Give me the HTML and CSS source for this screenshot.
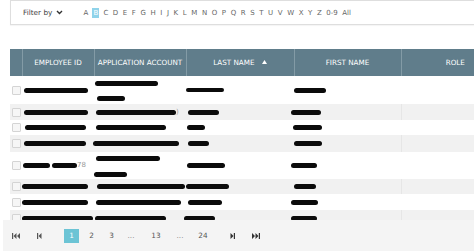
FILE: index.html
```html
<!DOCTYPE html>
<html>
<head>
<meta charset="utf-8">
<link rel="stylesheet" href="styles.css">
</head>
<body>
<div class="filter-bar">
  <span class="filter-label">Filter by
    <svg class="chev" width="7" height="5" viewBox="0 0 7 5"><path d="M1 1 L3.5 3.5 L6 1" fill="none" stroke="#333" stroke-width="1.4"/></svg>
  </span>
  <nav class="alpha">
    <a>A</a><a class="active">B</a><a>C</a><a>D</a><a>E</a><a>F</a><a>G</a><a>H</a><a>I</a><a>J</a><a>K</a><a>L</a><a>M</a><a>N</a><a>O</a><a>P</a><a>Q</a><a>R</a><a>S</a><a>T</a><a>U</a><a>V</a><a>W</a><a>X</a><a>Y</a><a>Z</a><a>0-9</a><a>All</a>
  </nav>
</div>

<div class="grid">
  <div class="grid-body">
    <table>
      <colgroup>
        <col class="c-check"><col class="c-emp"><col class="c-app"><col class="c-last"><col class="c-first"><col class="c-role">
      </colgroup>
      <thead>
        <tr>
          <th></th>
          <th>EMPLOYEE ID</th>
          <th>APPLICATION ACCOUNT</th>
          <th class="sorted">LAST NAME <svg class="sort" width="5" height="4" viewBox="0 0 5 4"><path d="M0 4 L2.5 0 L5 4Z" fill="#fff"/></svg></th>
          <th>FIRST NAME</th>
          <th>ROLE</th>
        </tr>
      </thead>
      <tbody>
        <tr class="h28">
          <td><span class="cb"></span></td>
          <td><span class="bar" style="margin-left:2px;width:64px"></span></td>
          <td><span class="bar" style="margin-left:1px;width:63px"></span><span class="bar line2" style="margin-left:3px;width:28px"></span></td>
          <td><span class="bar thin" style="margin-left:0;width:38px"></span></td>
          <td><span class="bar" style="margin-left:0;width:32px"></span></td>
          <td></td>
        </tr>
        <tr class="h16">
          <td><span class="cb"></span></td>
          <td><span class="bar" style="margin-left:2px;width:64px"></span></td>
          <td><span class="bar" style="margin-left:2px;width:80px"></span><span class="ghost">)</span></td>
          <td><span class="bar" style="margin-left:2px;width:31px"></span></td>
          <td><span class="bar" style="margin-left:-3px;width:30px"></span></td>
          <td></td>
        </tr>
        <tr class="h15">
          <td><span class="cb"></span></td>
          <td><span class="bar" style="margin-left:3px;width:61px"></span></td>
          <td><span class="bar" style="margin-left:2px;width:70px"></span></td>
          <td><span class="bar" style="margin-left:1px;width:18px"></span></td>
          <td><span class="bar" style="margin-left:-1px;width:29px"></span></td>
          <td></td>
        </tr>
        <tr class="h17">
          <td><span class="cb"></span></td>
          <td><span class="bar" style="margin-left:2px;width:62px"></span></td>
          <td><span class="bar" style="margin-left:-1px;width:86px"></span></td>
          <td><span class="bar" style="margin-left:2px;width:21px"></span></td>
          <td><span class="bar" style="margin-left:0;width:28px"></span></td>
          <td></td>
        </tr>
        <tr class="h27">
          <td><span class="cb"></span></td>
          <td><span class="bar" style="margin-left:1px;width:27px"></span><span class="bar" style="margin-left:2px;width:25px"></span><span class="ghost">78</span></td>
          <td><span class="bar" style="margin-left:2px;width:64px"></span><span class="bar line2" style="margin-left:0;width:33px"></span></td>
          <td><span class="bar" style="margin-left:1px;width:38px"></span></td>
          <td><span class="bar" style="margin-left:-3px;width:26px"></span></td>
          <td></td>
        </tr>
        <tr class="h15">
          <td><span class="cb"></span></td>
          <td><span class="bar" style="margin-left:0;width:66px"></span></td>
          <td><span class="bar" style="margin-left:3px;width:88px"></span></td>
          <td><span class="bar" style="margin-left:0;width:43px"></span></td>
          <td><span class="bar" style="margin-left:0;width:22px"></span></td>
          <td></td>
        </tr>
        <tr class="h16">
          <td><span class="cb"></span></td>
          <td><span class="bar" style="margin-left:0;width:66px"></span></td>
          <td><span class="bar" style="margin-left:2px;width:85px"></span></td>
          <td><span class="bar" style="margin-left:2px;width:34px"></span></td>
          <td><span class="bar" style="margin-left:-3px;width:27px"></span></td>
          <td></td>
        </tr>
        <tr class="h16">
          <td><span class="cb"></span></td>
          <td><span class="bar" style="margin-left:0;width:71px"></span></td>
          <td><span class="bar" style="margin-left:1px;width:71px"></span></td>
          <td><span class="bar" style="margin-left:-2px;width:31px"></span></td>
          <td><span class="bar" style="margin-left:-3px;width:26px"></span></td>
          <td></td>
        </tr>
      </tbody>
    </table>
  </div>
  <div class="pager">
    <a class="pg icon i-first"><svg width="8" height="6" viewBox="0 0 8 6"><rect x="0" y="0" width="1.2" height="6" fill="#555"/><path d="M4.5 0 L1.5 3 L4.5 6Z M8 0 L5 3 L8 6Z" fill="#555"/></svg></a>
    <a class="pg icon i-prev"><svg width="5" height="6" viewBox="0 0 5 6"><rect x="0" y="0" width="1.2" height="6" fill="#555"/><path d="M4.5 0 L1.5 3 L4.5 6Z" fill="#555"/></svg></a>
    <a class="pg num active">1</a>
    <a class="pg num">2</a>
    <a class="pg num">3</a>
    <a class="pg dots">...</a>
    <a class="pg num wide w13">13</a>
    <a class="pg dots d2">...</a>
    <a class="pg num wide w24">24</a>
    <a class="pg icon i-next"><svg width="5" height="6" viewBox="0 0 5 6"><path d="M0.5 0 L3.5 3 L0.5 6Z" fill="#333"/><rect x="3.8" y="0" width="1.2" height="6" fill="#333"/></svg></a>
    <a class="pg icon i-last"><svg width="8" height="6" viewBox="0 0 8 6"><path d="M0 0 L3 3 L0 6Z M3.5 0 L6.5 3 L3.5 6Z" fill="#333"/><rect x="6.8" y="0" width="1.2" height="6" fill="#333"/></svg></a>
  </div>
</div>
</body>
</html>
```

FILE: styles.css
```css
html, body {
  margin: 0;
  padding: 0;
  background: #fff;
  overflow: hidden;
  width: 474px;
  height: 252px;
}

body {
  font-family: "DejaVu Sans", Verdana, sans-serif;
  color: #555;
}

.filter-bar {
  margin-left: 10px;
  width: 480px;
  height: 25px;
  box-sizing: border-box;
  border: 1px solid #dedede;
  border-right: none;
  box-shadow: 0 1px 1px rgba(0,0,0,0.04);
  display: flex;
  align-items: center;
  padding-left: 12px;
}

.filter-label {
  font-size: 7.3px;
  color: #444;
  display: flex;
  align-items: center;
  gap: 4px;
  width: 60px;
}

.chev {
  display: block;
}

.alpha {
  display: flex;
  align-items: center;
  gap: 3.8px;
  font-size: 7px;
  color: #666;
}

.alpha a {
  display: block;
  padding: 1px 0.4px;
  line-height: 8px;
}

.alpha a.active {
  background: #8fd3ea;
  color: #fff;
  padding: 1px 1px;
}

.grid {
  margin-top: 24px;
}

.grid-body {
  margin-left: 10px;
  height: 171px;
  overflow: hidden;
}

table {
  border-collapse: collapse;
  table-layout: fixed;
  width: 499px;
}

col.c-check { width: 12px; }
col.c-emp { width: 72px; }
col.c-app { width: 92px; }
col.c-last { width: 108px; }
col.c-first { width: 107px; }
col.c-role { width: 108px; }

th {
  background: #607d8b;
  color: #fff;
  font-weight: normal;
  font-size: 7.2px;
  height: 27px;
  padding: 0;
  text-align: center;
  border-left: 1px solid #839ba6;
  white-space: nowrap;
}

th:first-child {
  border-left: none;
}

.sort {
  margin-left: 5px;
  vertical-align: 1px;
}

td {
  padding: 0;
  vertical-align: middle;
  font-size: 7px;
  color: #888;
  white-space: nowrap;
  overflow: visible;
}

tbody tr:nth-child(even) td {
  background: #f1f1f1;
}

tbody tr:nth-child(even) td:last-child {
  border-left: 1px solid #e6e6e6;
}

tr.h28 { height: 28px; }
tr.h27 { height: 27px; }
tr.h17 { height: 17px; }
tr.h16 { height: 16px; }
tr.h15 { height: 15px; }

.cb {
  display: block;
  width: 7px;
  height: 7px;
  margin-left: 2px;
  border: 1px solid #d4d4d4;
  border-radius: 1px;
  background: #f6f6f6;
}

.bar {
  display: inline-block;
  height: 5px;
  background: #0b0b0b;
  border-radius: 3px;
  vertical-align: middle;
}

.bar.thin {
  height: 4px;
}

.bar.line2 {
  display: block;
  margin-top: 9px;
}

.ghost {
  color: #999;
  font-size: 7px;
  vertical-align: middle;
}

.pager {
  margin-left: 3px;
  height: 31px;
  background: #f4f4f4;
  display: flex;
  align-items: center;
  padding-left: 9px;
  font-size: 7.3px;
  color: #555;
}

.pg {
  display: flex;
  align-items: center;
  justify-content: center;
  height: 14px;
}

.pg.icon.i-first { width: 8px; }
.pg.icon.i-prev { width: 5px; margin-left: 17px; }
.pg.num { width: 15px; margin-left: 5px; }
.pg.num.active {
  background: #6cc4d5;
  color: #fff;
  margin-left: 22px;
}
.pg.dots { width: 14px; margin-left: 5px; color: #888; }
.pg.num.wide { width: 18px; }
.pg.num.w13 { margin-left: 9px; }
.pg.dots.d2 { margin-left: 8px; }
.pg.num.w24 { margin-left: 7px; }
.pg.icon.i-next { width: 5px; margin-left: 17.5px; }
.pg.icon.i-last { width: 8px; margin-left: 17.5px; }
```
